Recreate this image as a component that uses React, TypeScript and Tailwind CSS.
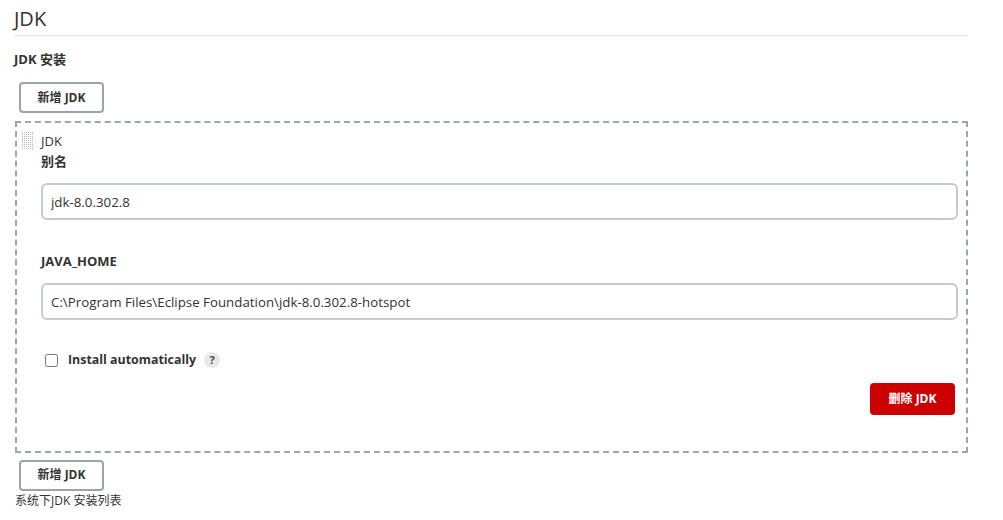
import React from "react"

const font = { fontFamily: '"Segoe UI", "Open Sans", "Noto Sans CJK SC", sans-serif' }

function AddButton() {
  return (
    <button className="h-[31px] w-[85px] rounded-[4px] border-2 border-[#9aa4ab] bg-white text-[12px] font-bold text-[#333]">
      新增 JDK
    </button>
  )
}

function DragHandle() {
  return (
    <svg width="12" height="18" viewBox="0 0 12 18" className="shrink-0">
      {Array.from({ length: 9 }).map((_, r) =>
        Array.from({ length: 6 }).map((_, c) => (
          <rect key={`${r}-${c}`} x={c * 2} y={r * 2} width="1" height="1" fill="#b5b5b5" />
        ))
      )}
    </svg>
  )
}

function Field({ label, value }: { label: string; value: string }) {
  return (
    <div className="flex flex-col">
      <label className="text-[13px] font-bold leading-[20px] text-[#333]">{label}</label>
      <input
        readOnly
        value={value}
        className="mt-[12px] h-[37px] w-full rounded-[6px] border-2 border-[#c3cbce] px-[8px] text-[13.3px] text-[#333] outline-none"
        style={font}
      />
    </div>
  )
}

export default function App() {
  return (
    <div className="h-[520px] w-[1003px] bg-white pl-[14px] pr-[35px] text-[#333]" style={font}>
      <h1 className="border-b border-[#e0e0e0] pt-[7px] pb-[4px] text-[20px] leading-[24px] text-[#333]">JDK</h1>
      <div className="pt-[14px] text-[13px] font-bold leading-[18px]">JDK 安装</div>
      <div className="pl-[5px] pt-[14px]">
        <AddButton />
      </div>
      <div className="ml-[1px] mt-[8px] border-2 border-dashed border-[#9ba6ad] pb-[36px] pl-[5px] pr-[8px] pt-[9px]">
        <div className="flex items-start gap-[7px]">
          <DragHandle />
          <div className="flex-1">
            <div className="text-[13px] leading-[19px]">JDK</div>
            <Field label="别名" value="jdk-8.0.302.8" />
            <div className="h-[31px]" />
            <Field label="JAVA_HOME" value={"C:\\Program Files\\Eclipse Foundation\\jdk-8.0.302.8-hotspot"} />
            <div className="mt-[31px] flex items-center pl-[4px]">
              <input type="checkbox" className="h-[13px] w-[13px]" />
              <span className="ml-[10px] text-[12.4px] font-bold">Install automatically</span>
              <span className="ml-[8px] flex h-[16px] w-[16px] items-center justify-center rounded-full bg-[#e8e8e8] text-[11px] font-bold text-[#444]">
                ?
              </span>
            </div>
            <div className="mr-[3px] mt-[13px] flex justify-end">
              <button className="h-[32px] w-[85px] rounded-[4px] bg-[#cc0000] text-[12px] font-bold text-white">
                删除 JDK
              </button>
            </div>
          </div>
        </div>
      </div>
      <div className="pl-[5px] pt-[7px]">
        <AddButton />
      </div>
      <div className="pl-[1px] pt-[2px] text-[12px] leading-[16px]">系统下JDK 安装列表</div>
    </div>
  )
}
